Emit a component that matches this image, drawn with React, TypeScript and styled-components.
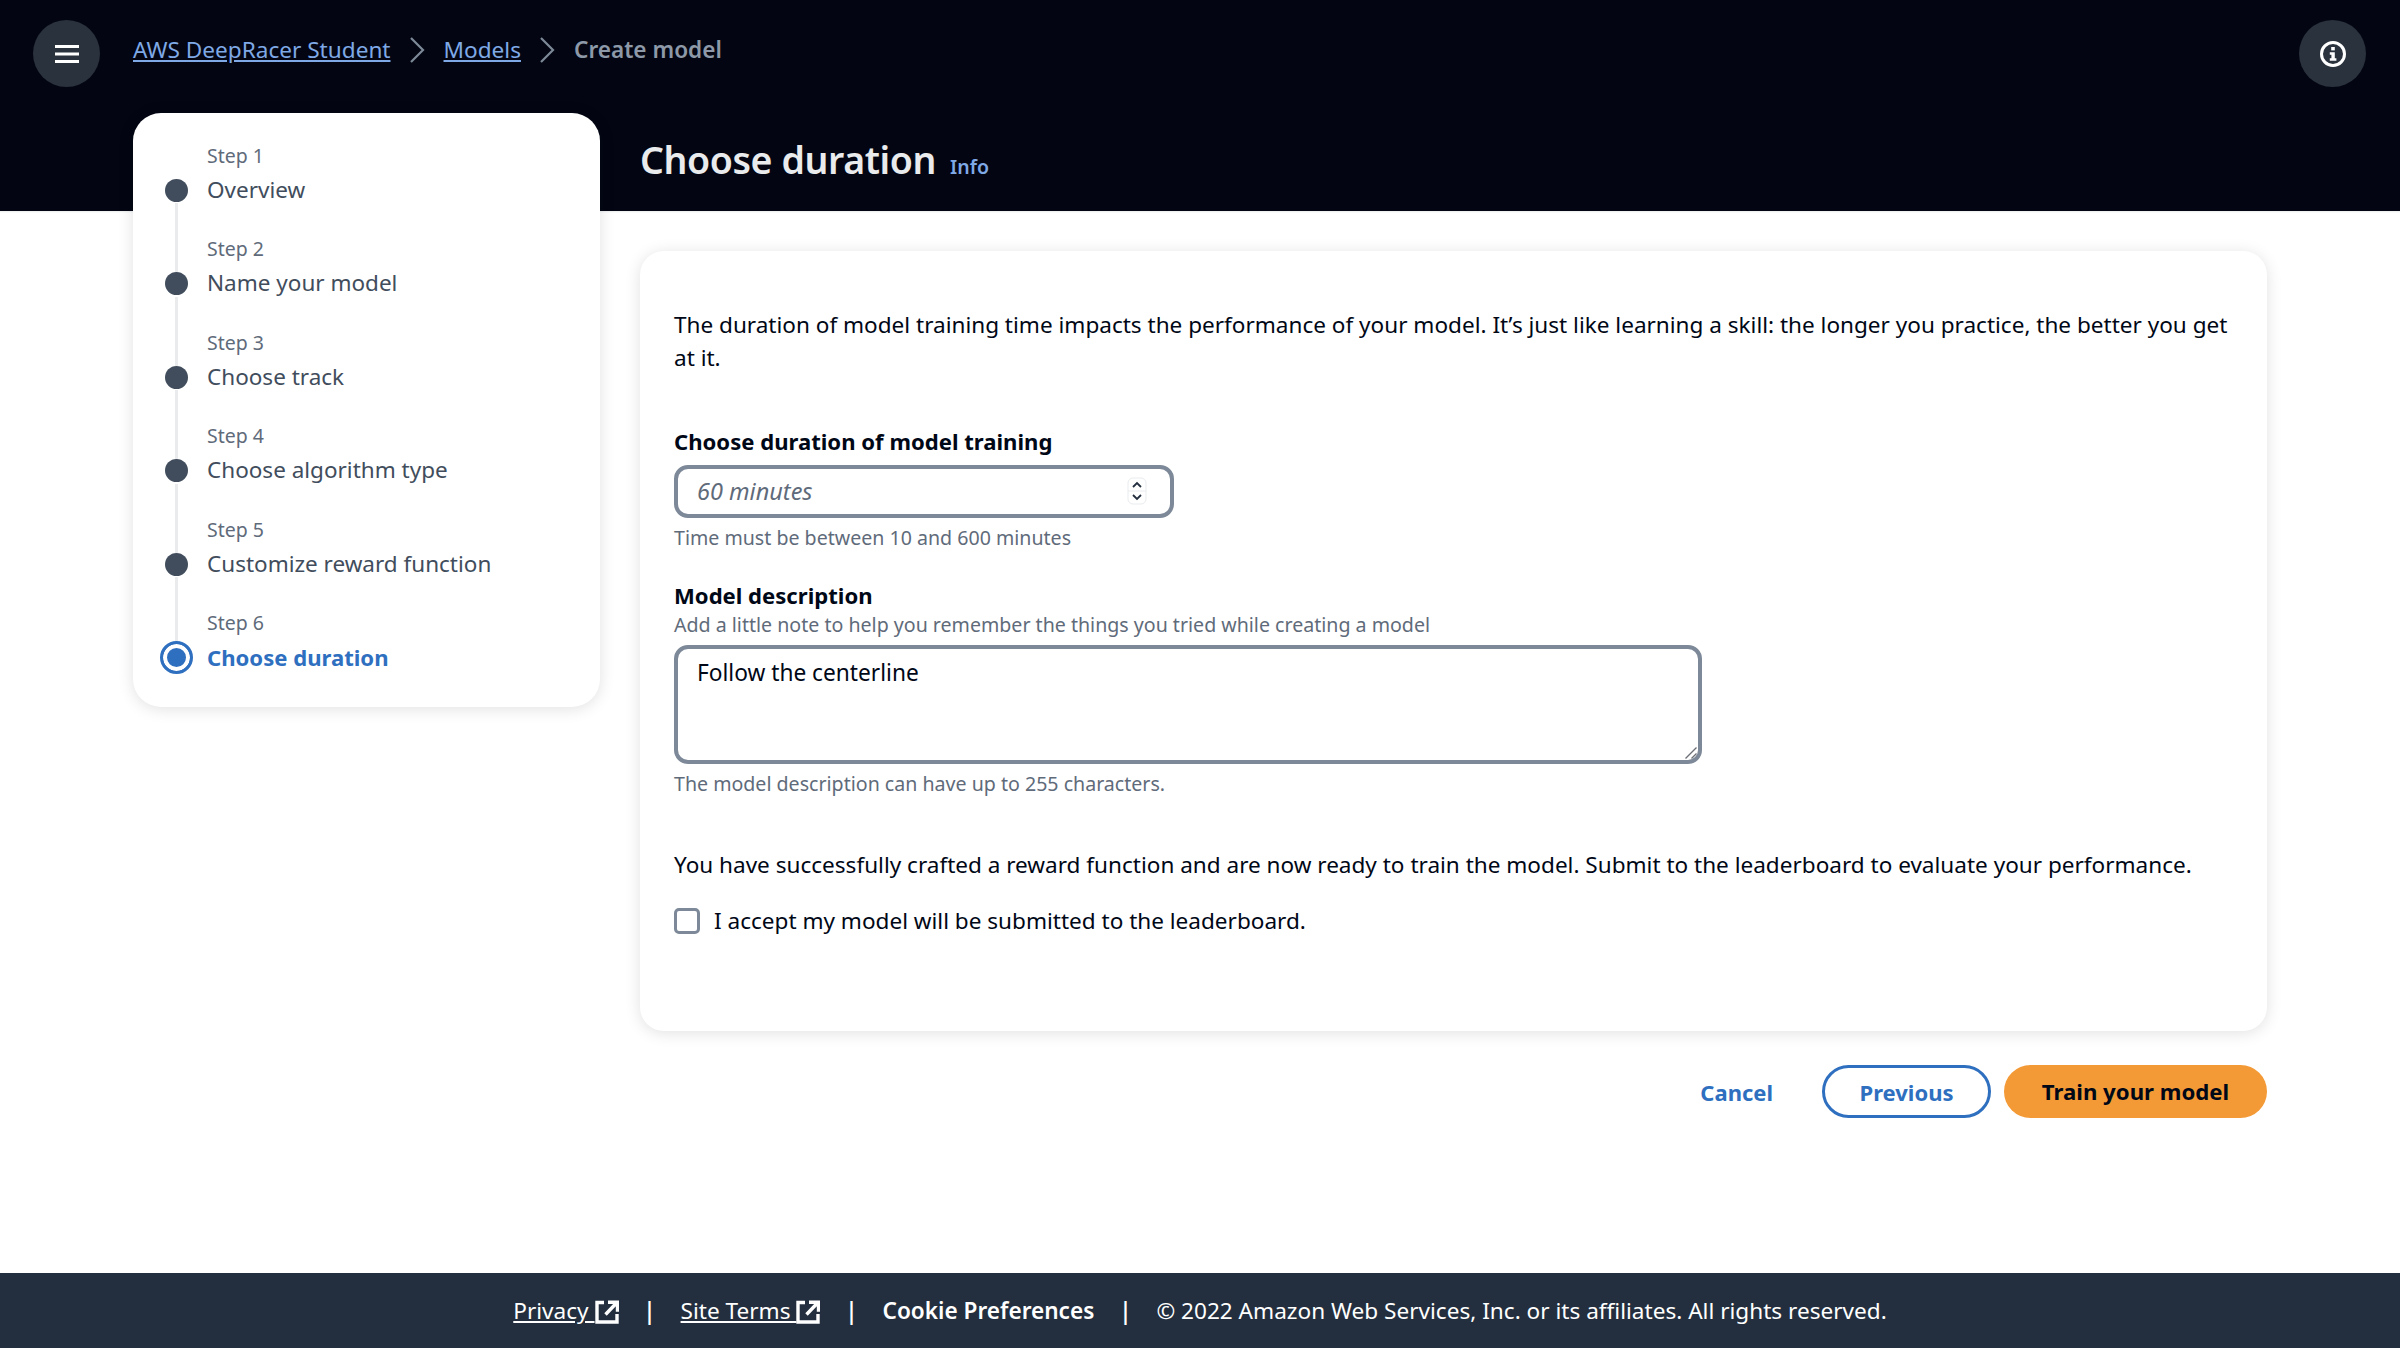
import React from 'react';
import styled, { createGlobalStyle } from 'styled-components';

const STEPS = ['Overview', 'Name your model', 'Choose track', 'Choose algorithm type', 'Customize reward function', 'Choose duration'];

const GlobalStyle = createGlobalStyle`
    html, body { margin: 0; padding: 0; background: #fff; }
    body { font-family: "Noto Sans", "Open Sans", sans-serif; color: #000716; }
    * { box-sizing: border-box; }
`;

const External = () => (
    <ExternalSvg viewBox="0 0 24 24" fill="none" stroke="#fff" strokeWidth="3.4">
        <path d="M9 2.5H2v19.5h20v-8" />
        <path d="M13 2.2h9.5v9.5M21.5 3L10.5 14.5" />
    </ExternalSvg>
);

const App: React.FC = () => {
    return (
        <Page>
            <GlobalStyle />
            <TopBar>
                <RoundButton aria-label="Menu">
                    <svg width="24" height="20" viewBox="0 0 24 20" fill="#fff">
                        <rect y="1" width="24" height="3" />
                        <rect y="8.5" width="24" height="3" />
                        <rect y="16" width="24" height="3" />
                    </svg>
                </RoundButton>
                <Crumbs>
                    <CrumbLink href="#">AWS DeepRacer Student</CrumbLink>
                    <Chevron viewBox="0 0 16 28" fill="none" stroke="#7d8998" strokeWidth="2.2"><path d="M2 2l12 12L2 26" /></Chevron>
                    <CrumbLink href="#">Models</CrumbLink>
                    <Chevron viewBox="0 0 16 28" fill="none" stroke="#7d8998" strokeWidth="2.2"><path d="M2 2l12 12L2 26" /></Chevron>
                    <CrumbCurrent>Create model</CrumbCurrent>
                </Crumbs>
                <RoundButton aria-label="Info">
                    <svg width="28" height="28" viewBox="0 0 28 28" fill="none">
                        <circle cx="14" cy="14" r="11.5" stroke="#fff" strokeWidth="3" />
                        <rect x="12.2" y="7" width="3.6" height="3.4" fill="#fff" />
                        <path d="M10.8 12.2h5v6h1.6v2.6h-6.6v-2.6h1.6v-3.4h-1.6z" fill="#fff" />
                    </svg>
                </RoundButton>
            </TopBar>
            <Main>
                <Sidebar>
                    {STEPS.map((title, i) => {
                        const active = i === STEPS.length - 1;
                        return (
                            <Step key={title} $first={i === 0}>
                                <StepLabel>Step {i + 1}</StepLabel>
                                <StepTitle $active={active}>{title}</StepTitle>
                                <Dot $active={active} />
                            </Step>
                        );
                    })}
                </Sidebar>
                <Content>
                    <TitleRow>
                        <Title>Choose duration</Title>
                        <InfoLink href="#">Info</InfoLink>
                    </TitleRow>
                    <Card>
                        <Intro>
                            The duration of model training time impacts the performance of your model. It’s just like learning a skill: the longer you practice, the better you get at it.
                        </Intro>
                        <Label>Choose duration of model training</Label>
                        <InputShell>
                            <DurationInput placeholder="60 minutes" />
                            <svg width="20" height="28" viewBox="0 0 20 28" fill="none">
                                <rect x="1" y="1" width="18" height="26" rx="5" fill="#fff" stroke="#e9ebed" />
                                <path d="M1 14h18" stroke="#e9ebed" />
                                <path d="M6 10l4-4 4 4M6 18l4 4 4-4" stroke="#232f3e" strokeWidth="1.8" />
                            </svg>
                        </InputShell>
                        <Hint>Time must be between 10 and 600 minutes</Hint>
                        <Label $top={27}>Model description</Label>
                        <SubLabel>Add a little note to help you remember the things you tried while creating a model</SubLabel>
                        <DescriptionWrap>
                            <Description readOnly defaultValue="Follow the centerline" />
                            <Grip viewBox="0 0 12 12" fill="none" stroke="#6b6f76" strokeWidth="1.4">
                                <path d="M0.5 11.5l11-11M6.5 11.5l5-5" />
                            </Grip>
                        </DescriptionWrap>
                        <Hint>The model description can have up to 255 characters.</Hint>
                        <Ready>You have successfully crafted a reward function and are now ready to train the model. Submit to the leaderboard to evaluate your performance.</Ready>
                        <Accept>
                            <CheckBox type="checkbox" />
                            I accept my model will be submitted to the leaderboard.
                        </Accept>
                    </Card>
                    <Actions>
                        <TextButton>Cancel</TextButton>
                        <OutlineButton>Previous</OutlineButton>
                        <PrimaryButton>Train your model</PrimaryButton>
                    </Actions>
                </Content>
            </Main>
            <Footer>
                <FooterLink href="#">Privacy <External /></FooterLink>
                <Sep>|</Sep>
                <FooterLink href="#">Site Terms <External /></FooterLink>
                <Sep>|</Sep>
                <CookieLink>Cookie Preferences</CookieLink>
                <Sep>|</Sep>
                <span>© 2022 Amazon Web Services, Inc. or its affiliates. All rights reserved.</span>
            </Footer>
        </Page>
    );
};

export default App;

const Page = styled.div`
    min-height: 1348px;
    display: flex;
    flex-direction: column;
    background: linear-gradient(#030612 211px, #e9ebed 211px, #fff 213px);
`;

const TopBar = styled.header`
    display: flex;
    align-items: center;
    height: 113px;
    padding: 0 34px 6px 33px;
`;

const RoundButton = styled.button`
    width: 67px;
    height: 67px;
    border: 0;
    padding: 0;
    border-radius: 50%;
    background: #2a323d;
    display: flex;
    align-items: center;
    justify-content: center;
`;

const Crumbs = styled.nav`
    flex: 1;
    display: flex;
    align-items: center;
    gap: 18.5px;
    margin-left: 33px;
    margin-bottom: 8px;
    font-size: 22.6px;
`;

const CrumbLink = styled.a`
    color: #7fa9e6;
    text-decoration: underline;
`;

const CrumbCurrent = styled.span`
    color: #8d99a8;
    font-weight: 600;
`;

const Chevron = styled.svg`
    width: 16px;
    height: 28px;
`;

const Main = styled.main`
    display: flex;
    align-items: flex-start;
    gap: 40px;
    padding: 0 133px;
`;

const Sidebar = styled.aside`
    flex: 0 0 467px;
    height: 594px;
    background: #fff;
    border-radius: 28px;
    padding: 29px 30px;
    box-shadow: 0 2px 16px rgba(0, 7, 22, 0.12);
`;

const Step = styled.div<{ $first: boolean }>`
    position: relative;
    height: 93.4px;
    padding-left: 44px;

    &::before {
        content: ${(p) => (p.$first ? 'none' : '""')};
        position: absolute;
        left: 12px;
        top: -32px;
        width: 3px;
        height: 69px;
        background: #e9ebed;
    }
`;

const StepLabel = styled.div`
    font-size: 19.5px;
    line-height: 28px;
    color: #5f6b7a;
`;

const StepTitle = styled.div<{ $active: boolean }>`
    font-size: ${(p) => (p.$active ? '22.1px' : '22.5px')};
    line-height: 34px;
    margin-top: 3px;
    font-weight: ${(p) => (p.$active ? 700 : 400)};
    color: ${(p) => (p.$active ? '#2e6fbf' : '#414d5c')};
`;

const Dot = styled.span<{ $active: boolean }>`
    position: absolute;
    left: ${(p) => (p.$active ? '-3px' : '2px')};
    top: ${(p) => (p.$active ? '32px' : '37px')};
    width: ${(p) => (p.$active ? '33px' : '23px')};
    height: ${(p) => (p.$active ? '33px' : '23px')};
    border-radius: 50%;
    background: ${(p) => (p.$active ? '#2e6fbf' : '#414d5c')};
    border: ${(p) => (p.$active ? '3px solid #2e6fbf' : '0')};
    box-shadow: ${(p) => (p.$active ? 'inset 0 0 0 4px #fff' : 'none')};
`;

const Content = styled.div`
    flex: 1;
    min-width: 0;
`;

const TitleRow = styled.div`
    height: 138px;
    display: flex;
    align-items: baseline;
    gap: 14px;
    padding-top: 21px;
`;

const Title = styled.h1`
    margin: 0;
    font-size: 37.5px;
    letter-spacing: -0.4px;
    font-weight: 600;
    color: #e9ebed;
`;

const InfoLink = styled.a`
    font-size: 19.5px;
    font-weight: 600;
    color: #7fa9e6;
    text-decoration: none;
`;

const Card = styled.section`
    height: 780px;
    background: #fff;
    border-radius: 24px;
    padding: 56.5px 34px 0;
    box-shadow: 0 2px 16px rgba(0, 7, 22, 0.12);
`;

const Intro = styled.p`
    margin: 0;
    font-size: 22.56px;
    line-height: 33.5px;
`;

const Label = styled.div<{ $top?: number }>`
    margin-top: ${(p) => p.$top ?? 50}px;
    font-size: 22.1px;
    line-height: 32px;
    font-weight: 700;
`;

const SubLabel = styled.div`
    font-size: 19.6px;
    line-height: 28px;
    color: #5f6b7a;
`;

const InputShell = styled.div`
    margin-top: 8px;
    width: 500px;
    height: 53px;
    border: 4px solid #7d8998;
    border-radius: 14px;
    padding: 0 23px 0 19px;
    display: flex;
    align-items: center;
`;

const DurationInput = styled.input`
    flex: 1;
    min-width: 0;
    border: 0;
    outline: 0;
    padding: 0;
    background: transparent;
    font: italic 23.5px "Noto Sans", sans-serif;

    &::placeholder {
        color: #5f6b7a;
        opacity: 1;
    }
`;

const Hint = styled.div`
    margin-top: 6px;
    font-size: 19.6px;
    line-height: 28px;
    color: #5f6b7a;
`;

const DescriptionWrap = styled.div`
    position: relative;
    margin-top: 6px;
    width: 1028px;
    height: 119px;
`;

const Description = styled.textarea`
    display: block;
    width: 100%;
    height: 100%;
    border: 4px solid #7d8998;
    border-radius: 14px;
    padding: 7px 19px;
    outline: 0;
    resize: none;
    color: #000716;
    font: 22.7px/33px "Noto Sans", sans-serif;
`;

const Grip = styled.svg`
    position: absolute;
    right: 5px;
    bottom: 5px;
    width: 12px;
    height: 12px;
`;

const Ready = styled.p`
    margin: 50px 0 0;
    font-size: 22.56px;
    line-height: 33.5px;
`;

const Accept = styled.label`
    margin-top: 23px;
    display: flex;
    align-items: center;
    gap: 14px;
    font-size: 22.56px;
    line-height: 33.5px;
`;

const CheckBox = styled.input`
    appearance: none;
    margin: 0;
    width: 26px;
    height: 26px;
    border: 3px solid #7d8998;
    border-radius: 5px;
    background: #fff;
`;

const Actions = styled.div`
    margin-top: 34px;
    display: flex;
    justify-content: flex-end;
    align-items: center;
    gap: 13px;
`;

const TextButton = styled.button`
    height: 53px;
    padding: 0 36px;
    border: 0;
    background: none;
    color: #2e6fbf;
    font: 700 22px "Noto Sans", sans-serif;
`;

const OutlineButton = styled.button`
    width: 169px;
    height: 53px;
    border: 3px solid #2e6fbf;
    border-radius: 27px;
    background: #fff;
    color: #2e6fbf;
    font: 700 22px "Noto Sans", sans-serif;
`;

const PrimaryButton = styled.button`
    width: 263px;
    height: 53px;
    border: 0;
    border-radius: 27px;
    background: #f39a36;
    color: #000716;
    font: 700 22.2px "Noto Sans", sans-serif;
`;

const Footer = styled.footer`
    margin-top: auto;
    height: 75px;
    background: #232f3e;
    color: #fff;
    display: flex;
    align-items: center;
    justify-content: center;
    gap: 24.8px;
    font-size: 22.6px;
`;

const FooterLink = styled.a`
    color: #fff;
    text-decoration: underline;
`;

const ExternalSvg = styled.svg`
    width: 24px;
    height: 24px;
    vertical-align: -5px;
`;

const Sep = styled.span`
    font-weight: 600;
`;

const CookieLink = styled.span`
    font-weight: 600;
`;
